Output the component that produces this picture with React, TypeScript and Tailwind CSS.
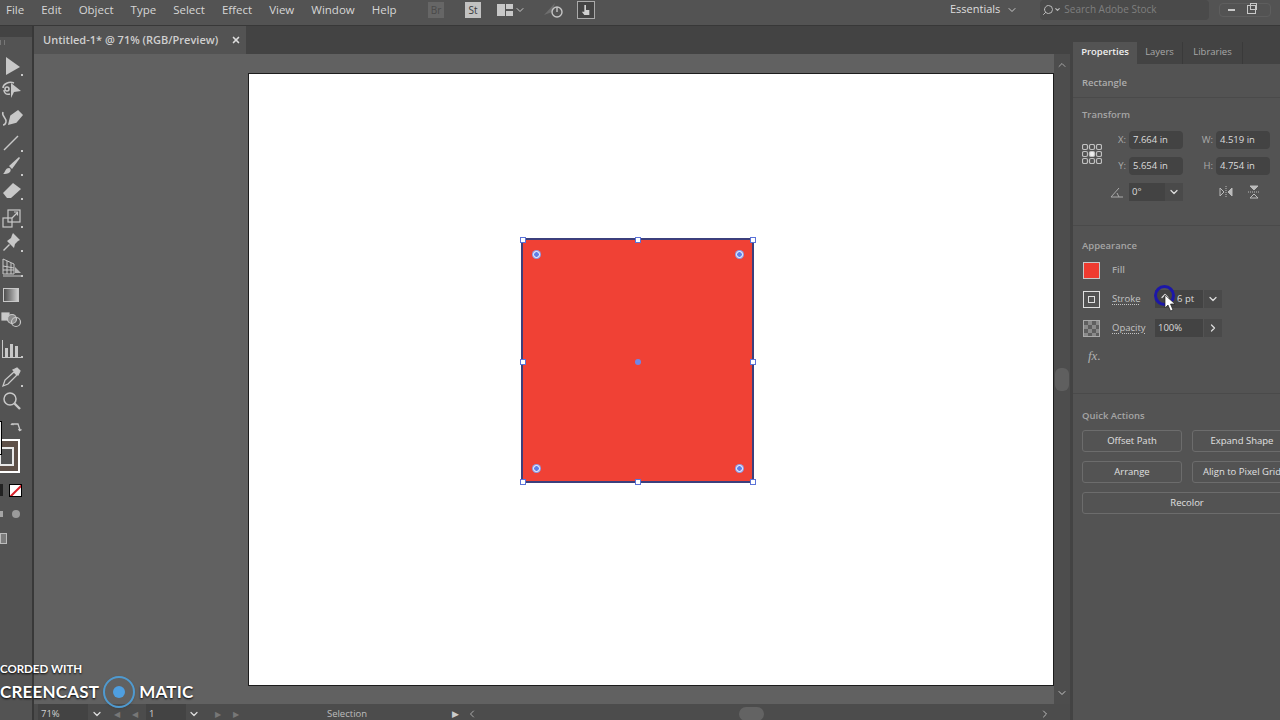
import { ChevronDown, ChevronRight, ChevronLeft, ChevronUp, Search, X } from "lucide-react"

const menus = ["File", "Edit", "Object", "Type", "Select", "Effect", "View", "Window", "Help"]

const tools: { key: string; cls: string; icon: React.ReactNode }[] = [
  {
    key: "selection",
    cls: "h-6 mt-[9px]",
    icon: (
      <svg viewBox="0 0 24 24" className="w-6 h-6" fill="#c8c8c8">
        <path d="M6 3 L20 13 L6 21 Z" />
        <path d="M21 20h2v2h-2z" />
      </svg>
    ),
  },
  {
    key: "direct",
    cls: "h-6",
    icon: (
      <svg viewBox="0 0 24 24" className="w-6 h-6" fill="none" stroke="#c8c8c8" strokeWidth="1.5">
        <path d="M3 10c0-4 6-7 11-5M4 12c0 3 2 5 6 4" />
        <circle cx="7" cy="11" r="2" />
        <path d="M11 5 L21 13 L14 14 L11 20 Z" fill="#c8c8c8" stroke="none" />
      </svg>
    ),
  },
  {
    key: "pen",
    cls: "h-6 mt-1",
    icon: (
      <svg viewBox="0 0 24 24" className="w-6 h-6" fill="none" stroke="#c8c8c8" strokeWidth="1.5">
        <path d="M9 18 L11 10 L18 5 L22 9 L16 16 Z" fill="#c8c8c8" />
        <path d="M3 6c-2 4 4 6 3 10-.5 2-2 3-3 3" />
      </svg>
    ),
  },
  {
    key: "line",
    cls: "h-6",
    icon: (
      <svg viewBox="0 0 24 24" className="w-6 h-6" fill="none" stroke="#c8c8c8" strokeWidth="1.4">
        <path d="M4 20 L18 6" />
        <path d="M21 20h2v2h-2z" fill="#c8c8c8" stroke="none" />
      </svg>
    ),
  },
  {
    key: "brush",
    cls: "h-6",
    icon: (
      <svg viewBox="0 0 24 24" className="w-6 h-6" fill="#c8c8c8">
        <path d="M9 12 L19 3 L20 4 L12 15 Z" />
        <path d="M3 20c2-1 2-6 6-6 2 0 2 3 1 4-2 2-5 2-7 2Z" />
        <path d="M21 20h2v2h-2z" />
      </svg>
    ),
  },
  {
    key: "eraser",
    cls: "h-6",
    icon: (
      <svg viewBox="0 0 24 24" className="w-6 h-6" fill="#c8c8c8">
        <path d="M3 15 L13 5 L21 11 L11 20 H7 Z" />
        <path d="M21 20h2v2h-2z" />
      </svg>
    ),
  },
  {
    key: "scale",
    cls: "h-6 mt-1",
    icon: (
      <svg viewBox="0 0 24 24" className="w-6 h-6" fill="none" stroke="#c8c8c8" strokeWidth="1.2">
        <rect x="3" y="12" width="9" height="9" />
        <rect x="8" y="4" width="12" height="12" />
        <path d="M12 12l5-5M14 6h3.500v3.500" />
        <path d="M21 20h2v2h-2z" fill="#c8c8c8" stroke="none" />
      </svg>
    ),
  },
  {
    key: "pin",
    cls: "h-6",
    icon: (
      <svg viewBox="0 0 24 24" className="w-6 h-6" fill="#c8c8c8">
        <path d="M13 3 L20 10 L18 11 L15 14 L14 18 L7 11 L11 8 L12 5 Z" />
        <path d="M3 20 L9 14 L10 15 L4 21 Z" />
        <path d="M21 20h2v2h-2z" />
      </svg>
    ),
  },
  {
    key: "mesh",
    cls: "h-6 mt-px",
    icon: (
      <svg viewBox="0 0 24 24" className="w-6 h-6" fill="none" stroke="#c8c8c8" strokeWidth="1">
        <path d="M3 4 L14 9 V19 H3 Z M3 11 L14 13 M3 15 H14 M7 6 V19 M11 8 V19" />
        <path d="M15 12 L21 18 H15 Z" fill="#b5b5b5" stroke="none" />
        <path d="M3 21h18" />
        <path d="M21 20h2v2h-2z" fill="#c8c8c8" stroke="none" />
      </svg>
    ),
  },
  {
    key: "gradient",
    cls: "h-6 mt-1",
    icon: <div className="w-4 h-[14px] ml-[3px] mt-[5px] border border-[#c8c8c8] bg-gradient-to-r from-[#4f4f4f] to-[#cfcfcf]" />,
  },
  {
    key: "blend",
    cls: "h-6",
    icon: (
      <svg viewBox="0 0 24 24" className="w-6 h-6" fill="none" stroke="#c8c8c8" strokeWidth="1.2">
        <rect x="2" y="6" width="7" height="7" fill="#c8c8c8" />
        <circle cx="12" cy="12" r="4.500" fill="#8a8a8a" />
        <circle cx="16" cy="15" r="4.500" />
      </svg>
    ),
  },
  {
    key: "chart",
    cls: "h-6 mt-[5px]",
    icon: (
      <svg viewBox="0 0 24 24" className="w-6 h-6" fill="#c8c8c8">
        <path d="M2 4h1v17h18v1H2z" />
        <path d="M5 12h3v9H5zM10 8h3v13h-3zM15 10h3v11h-3z" />
        <path d="M21 20h2v2h-2z" />
      </svg>
    ),
  },
  {
    key: "eyedropper",
    cls: "h-6 mt-[5px]",
    icon: (
      <svg viewBox="0 0 24 24" className="w-6 h-6" fill="none" stroke="#c8c8c8" strokeWidth="1.3">
        <path d="M3 21 L5 15 L14 7 L17 10 L8 19 Z" />
        <path d="M13 5 L17 3 L20 6 L18 10 Z" fill="#c8c8c8" />
        <path d="M21 20h2v2h-2z" fill="#c8c8c8" stroke="none" />
      </svg>
    ),
  },
  {
    key: "zoom",
    cls: "h-6",
    icon: (
      <svg viewBox="0 0 24 24" className="w-6 h-6" fill="none" stroke="#c8c8c8" strokeWidth="1.5">
        <circle cx="10" cy="10" r="6" />
        <path d="M14.500 14.500 L20 20" strokeWidth="2.400" />
      </svg>
    ),
  },
]

function Toolbar() {
  return (
    <div className="w-[32px] shrink-0 bg-[#535353] flex flex-col overflow-hidden">
      <div className="h-[11px] shrink-0 bg-[#434343]" />
      <div className="h-[5px] mt-[3px] shrink-0 w-[5px] border-x border-[#777]" />
      {tools.map((t) => (
        <div key={t.key} className={t.cls}>
          {t.icon}
        </div>
      ))}
      <div className="relative h-[58px] mt-[6px] shrink-0">
        <svg viewBox="0 0 12 12" className="absolute left-[10px] top-[2px] w-[12px] h-[12px]" fill="none" stroke="#c8c8c8" strokeWidth="1.3">
          <path d="M2 3h6l2 6M1 4l1-1.500M2 3l1.500 1M10 10L8.500 8M10 9.500l1.500-1" />
        </svg>
        <div className="absolute -left-[8px] top-[20px] w-[28px] h-[34px] border-2 border-white bg-[#5e5048] flex items-center justify-center">
          <div className="w-[15px] h-[19px] border-2 border-[#e8e8e8] bg-[#535353]" />
        </div>
        <div className="absolute -left-[6px] top-[2px] w-[8px] h-[34px] bg-[#f0f0f0] border border-black" />
      </div>
      <div className="h-[24px] mt-px flex items-center">
        <div className="w-[3px] h-[12px] bg-[#222]" />
        <div className="ml-[6px] w-[13px] h-[13px] border border-black bg-white overflow-hidden relative">
          <div className="absolute left-[-3px] top-[5px] w-[18px] h-[2px] bg-[#d8202a] -rotate-45" />
        </div>
      </div>
      <div className="h-[24px] flex items-center">
        <div className="w-[3px] h-[6px] bg-[#a5a5a5]" />
        <div className="ml-[9px] w-[8px] h-[8px] rounded-full bg-[#9a9a9a]" />
      </div>
      <div className="mt-[7px] w-[7px] h-[11px] border border-[#bbb] bg-[#7c7c7c]" />
    </div>
  )
}

function Field({ label, value }: { label: string; value: string }) {
  return (
    <div className="flex items-center h-[18px] w-[71px] shrink-0">
      <span className="w-[17px] shrink-0 text-[9.500px] text-[#aaa] text-right pr-[3px]">{label}</span>
      <span className="w-[54px] h-[18px] bg-[#434343] rounded-sm text-[9.500px] text-[#dcdcdc] pl-1 leading-[18px]">{value}</span>
    </div>
  )
}

function QuickBtn({ label, cls }: { label: string; cls: string }) {
  return (
    <div className={`${cls} shrink-0 h-[22px] border border-[#6c6c6c] rounded-[3px] text-[9.500px] font-medium leading-[20px] text-center text-[#e0e0e0] whitespace-nowrap`}>{label}</div>
  )
}

function RightPanel() {
  return (
    <div className="w-[207px] shrink-0 bg-[#535353] overflow-hidden flex flex-col">
      <div className="h-[16px] bg-[#434343] shrink-0" />
      <div className="h-[22px] bg-[#434343] shrink-0 flex text-[9.500px] leading-[20px]">
        <div className="w-[64px] bg-[#535353] text-[#f0f0f0] font-semibold text-center">Properties</div>
        <div className="w-[46px] text-[#a8a8a8] text-center border-r border-[#3a3a3a]">Layers</div>
        <div className="w-[60px] text-[#a8a8a8] text-center border-r border-[#3a3a3a]">Libraries</div>
      </div>
      <div className="px-[9px] pt-[12px] h-[34px] border-b border-[#4a4a4a] text-[9.500px] font-semibold text-[#adadad] shrink-0">Rectangle</div>
      <div className="pl-[9px] pt-[10px] h-[128px] border-b border-[#4a4a4a] shrink-0">
        <div className="text-[9.500px] font-semibold text-[#a5a5a5] leading-[14px]">Transform</div>
        <div className="flex mt-[9px]">
          <svg viewBox="0 0 20 20" className="w-[20px] h-[20px] mt-[13px] shrink-0" fill="none" stroke="#c0c0c0" strokeWidth="1.200">
            {[2, 9, 16].map((x) => [2, 9, 16].map((y) => (
              <rect key={`${x}-${y}`} x={x - 1.5} y={y - 1.5} width="5" height="5" rx="1.500" fill={x === 9 && y === 9 ? "#eee" : "none"} />
            )))}
          </svg>
          <div className="ml-[10px] flex flex-col gap-2 -mr-[100px]">
            <div className="flex gap-[16px]">
              <Field label="X:" value="7.664 in" />
              <Field label="W:" value="4.519 in" />
            </div>
            <div className="flex gap-[16px]">
              <Field label="Y:" value="5.654 in" />
              <Field label="H:" value="4.754 in" />
            </div>
            <div className="flex items-center h-[18px]">
              <svg viewBox="0 0 14 12" className="w-[14px] h-[12px] -ml-[2px] mr-[5px] shrink-0" fill="none" stroke="#aaa" strokeWidth="1">
                <path d="M1 11h12M1 11L9 2M7 7l2 4" />
              </svg>
              <div className="w-[36px] h-[18px] bg-[#434343] text-[9.500px] text-[#dcdcdc] pl-[3px] leading-[18px]">0°</div>
              <div className="w-[18px] h-[18px] bg-[#4a4a4a] flex items-center justify-center">
                <ChevronDown className="w-3 h-3 text-[#ddd]" strokeWidth={2.5} />
              </div>
              <svg viewBox="0 0 14 12" className="ml-[36px] w-[14px] h-[12px]" fill="#bbb" stroke="#bbb">
                <path d="M7 0v12" strokeDasharray="1 1" />
                <path d="M1 2 L5 6 L1 10 Z" fill="none" />
                <path d="M13 2 L9 6 L13 10 Z" />
              </svg>
              <svg viewBox="0 0 12 14" className="ml-[15px] w-[12px] h-[14px]" fill="#bbb" stroke="#bbb">
                <path d="M0 7h12" strokeDasharray="1 1" />
                <path d="M2 1 L10 1 L6 5 Z" />
                <path d="M2 13 L10 13 L6 9 Z" fill="none" />
              </svg>
            </div>
          </div>
        </div>
      </div>
      <div className="pl-[9px] pt-[13px] h-[168px] border-b border-[#4a4a4a] shrink-0">
        <div className="text-[9.500px] font-semibold text-[#a5a5a5] leading-[14px]">Appearance</div>
        <div className="flex items-center h-[18px] mt-[8px]">
          <div className="ml-px w-[17px] h-[17px] bg-[#ef3b30] border border-[#c8c8c8] shrink-0" />
          <span className="ml-[12px] mt-px text-[9.500px] font-semibold text-[#a8a8a8]">Fill</span>
        </div>
        <div className="flex items-center h-[18px] mt-[11px]">
          <div className="ml-px w-[17px] h-[17px] border border-[#e0e0e0] flex items-center justify-center shrink-0">
            <div className="w-[7px] h-[7px] border border-[#e0e0e0]" />
          </div>
          <span className="ml-[12px] mt-px w-[39px] text-[9.500px] text-[#c4c4c4] underline decoration-dotted underline-offset-2">Stroke</span>
          <div className="ml-[4px] w-[48px] h-[18px] bg-[#434343] text-[9.500px] text-[#dcdcdc] pl-[22px] leading-[18px]">6 pt</div>
          <div className="w-[18px] h-[18px] bg-[#4a4a4a] flex items-center justify-center ml-px">
            <ChevronDown className="w-3 h-3 text-[#ddd]" strokeWidth={2.5} />
          </div>
        </div>
        <div className="flex items-center h-[18px] mt-[11px]">
          <div className="ml-px w-[17px] h-[17px] border border-[#aaa] bg-[repeating-conic-gradient(#8a8a8a_0_25%,#5f5f5f_0_50%)] bg-[length:8px_8px] shrink-0" />
          <span className="ml-[12px] mt-px w-[39px] text-[9.500px] text-[#c4c4c4] underline decoration-dotted underline-offset-2">Opacity</span>
          <div className="ml-[4px] w-[48px] h-[18px] bg-[#434343] text-[9.500px] text-[#dcdcdc] pl-[3px] leading-[18px]">100%</div>
          <div className="w-[18px] h-[18px] bg-[#4a4a4a] flex items-center justify-center ml-px">
            <ChevronRight className="w-3 h-3 text-[#ddd]" strokeWidth={2.5} />
          </div>
        </div>
        <div className="ml-[6px] mt-[11px] font-['Liberation_Serif',serif] italic text-[13px] text-[#b0b0b0] leading-4">fx.</div>
      </div>
      <div className="pl-[9px] pt-[15px]">
        <div className="text-[9.500px] font-semibold text-[#a5a5a5] leading-[14px]">Quick Actions</div>
        <div className="flex gap-[10px] mt-[7px]">
          <QuickBtn label="Offset Path" cls="w-[100px]" />
          <QuickBtn label="Expand Shape" cls="w-[100px]" />
        </div>
        <div className="flex gap-[10px] mt-[9px]">
          <QuickBtn label="Arrange" cls="w-[100px]" />
          <QuickBtn label="Align to Pixel Grid" cls="w-[100px]" />
        </div>
        <div className="flex mt-[9px] w-[210px]">
          <QuickBtn label="Recolor" cls="w-[210px]" />
        </div>
      </div>
    </div>
  )
}

function Handle({ cls }: { cls: string }) {
  return <div className={`absolute w-[6px] h-[6px] bg-white border border-[#5b73d8] ${cls}`} />
}

function Corner({ cls }: { cls: string }) {
  return <div className={`absolute w-[7px] h-[7px] rounded-full bg-[#5f7fe8] border-[1.500px] border-white ring-1 ring-[#8f9fe8] ${cls}`} />
}

function Canvas() {
  return (
    <div className="flex-1 flex min-h-0">
      <div className="flex-1 bg-[#616161] pl-[214px] pt-[19px] overflow-hidden">
        <div className="relative w-[806px] h-[613px] bg-white border border-[#1c1c1c]">
          <div className="absolute left-[272px] top-[164px] w-[233px] h-[245px] bg-[#f04135] border-2 border-[#3c3f7c] rounded-[4px]" />
          <Handle cls="left-[271px] top-[163px]" />
          <Handle cls="left-[386px] top-[163px]" />
          <Handle cls="left-[501px] top-[163px]" />
          <Handle cls="left-[271px] top-[285px]" />
          <Handle cls="left-[501px] top-[285px]" />
          <Handle cls="left-[271px] top-[405px]" />
          <Handle cls="left-[386px] top-[405px]" />
          <Handle cls="left-[501px] top-[405px]" />
          <Corner cls="left-[284px] top-[177px]" />
          <Corner cls="left-[487px] top-[177px]" />
          <Corner cls="left-[284px] top-[391px]" />
          <Corner cls="left-[487px] top-[391px]" />
          <div className="absolute left-[386px] top-[285px] w-[6px] h-[6px] rounded-full bg-[#6f86e8]" />
        </div>
      </div>
      <div className="w-[16px] bg-[#4d4d4d] shrink-0 flex flex-col items-center justify-between py-[5px]">
        <ChevronUp className="w-3 h-3 text-[#a5a5a5]" />
        <div className="w-[14px] h-[23px] rounded-md bg-[#5f5f5f]" />
        <ChevronDown className="w-3 h-3 text-[#c5c5c5]" />
      </div>
    </div>
  )
}

function StatusBar() {
  return (
    <div className="h-[16px] shrink-0 bg-[#4c4c4c] overflow-hidden text-[9.500px] text-[#d0d0d0]">
      <div className="h-[20px] flex items-center">
        <div className="ml-[4px] w-[50px] h-[20px] bg-[#434343] pl-[3px] leading-[20px]">71%</div>
        <ChevronDown className="ml-[3px] w-3 h-3 text-[#ddd]" strokeWidth={2.5} />
        <div className="ml-[11px] w-[32px] flex gap-[12px] text-[8px] text-[#777]">
          <span>◀</span>
          <span>◀</span>
        </div>
        <div className="w-[40px] h-[20px] bg-[#434343] pl-[3px] leading-[20px]">1</div>
        <ChevronDown className="ml-[2px] w-3 h-3 text-[#ddd]" strokeWidth={2.5} />
        <div className="ml-[15px] w-[30px] flex gap-[12px] text-[8px] text-[#777]">
          <span>▶</span>
          <span>▶</span>
        </div>
        <div className="w-[204px] text-center text-[#bdbdbd]">Selection</div>
        <span className="ml-[3px] text-[9px] text-[#ccc]">▶</span>
        <ChevronLeft className="ml-[7px] w-3 h-3 text-[#aaa]" />
        <div className="ml-[261px] w-[25px] h-[14px] rounded-full bg-[#636363]" />
        <div className="flex-1" />
        <ChevronRight className="mr-[19px] w-3 h-3 text-[#bbb]" />
      </div>
    </div>
  )
}

export default function App() {
  return (
    <div className="relative w-[1280px] h-[720px] overflow-hidden bg-[#535353] flex flex-col font-['Open_Sans',sans-serif]">
      {/* Menu bar */}
      <div className="h-[26px] shrink-0 bg-[#535353] border-b border-[#383838] flex items-center text-[11.500px] text-[#d6d6d6] pb-[6px]">
        <div className="flex gap-[17px] pl-[6px] w-[428px] shrink-0 whitespace-nowrap">
          {menus.map((m) => (
            <span key={m}>{m}</span>
          ))}
        </div>
        <div className="w-[16px] h-[16px] bg-[#666] text-[10px] text-[#4a4a4a] text-center leading-4">Br</div>
        <div className="ml-[21px] w-[16px] h-[16px] bg-[#c2c2c2] text-[10px] text-[#3a3a3a] text-center leading-4">St</div>
        <svg viewBox="0 0 16 12" className="ml-[16px] w-[16px] h-[12px]" fill="#c8c8c8">
          <path d="M0 0h8v12H0zM9 0h7v5H9zM9 7h7v5H9z" />
        </svg>
        <ChevronDown className="ml-[1px] w-3 h-3 text-[#c8c8c8]" />
        <svg viewBox="0 0 24 18" className="ml-[16px] w-[24px] h-[18px]" fill="none" stroke="#9a9a9a" strokeWidth="1.4">
          <path d="M2 14 L13 2 L10 11 Z" fill="#6e6e6e" stroke="none" />
          <circle cx="15" cy="11" r="5" stroke="#c5c5c5" />
          <path d="M15 6v5" stroke="#c5c5c5" />
        </svg>
        <div className="ml-[11px] w-[18px] h-[18px] border border-[#aaa] bg-[#444] flex items-center justify-center">
          <svg viewBox="0 0 12 14" className="w-[10px] h-[12px]" fill="#d0d0d0">
            <path d="M4 1h2v6h4v6H4L1 9h3z" />
          </svg>
        </div>
        <span className="ml-[355px] text-[11px] text-[#dedede]">Essentials</span>
        <ChevronDown className="ml-[6px] w-3 h-3 text-[#c8c8c8]" />
        <div className="ml-[22px] w-[169px] h-[20px] bg-[#4a4a4a] rounded-sm flex items-center pl-[2px] text-[10px] text-[#7f7f7f] shrink-0">
          <Search className="w-[12px] h-[12px] text-[#bbb] -scale-x-100" />
          <ChevronDown className="w-[7px] h-[7px] text-[#bbb] mr-[3px]" strokeWidth={4} />
          Search Adobe Stock
        </div>
        <div className="ml-[10px] h-[14px] w-[52px] shrink-0 rounded-sm border border-[#5e5e5e] flex items-center">
          <div className="ml-[8px] w-[7px] h-[2px] bg-[#c8c8c8]" />
          <div className="relative ml-[12px] w-[9px] h-[9px] border border-[#c8c8c8]">
            <div className="absolute -top-[3px] left-[2px] w-[7px] h-[7px] border border-[#c8c8c8]" />
          </div>
        </div>
      </div>
      {/* Workspace */}
      <div className="flex-1 flex min-h-0">
        <Toolbar />
        <div className="w-[2px] bg-[#383838] shrink-0" />
        <div className="w-[1036px] shrink-0 flex flex-col">
          <div className="h-[28px] shrink-0 bg-[#434343] flex">
            <div className="w-[212px] bg-[#535353] flex items-center justify-between pl-[9px] pr-[5px] text-[11px] font-semibold text-[#cfcfcf]">
              <span>Untitled-1* @ 71% (RGB/Preview)</span>
              <X className="w-[10px] h-[10px] text-[#ddd]" strokeWidth={4} />
            </div>
          </div>
          <Canvas />
          <StatusBar />
        </div>
        <div className="w-[3px] bg-[#434343] shrink-0" />
        <RightPanel />
      </div>
      {/* Recorder watermark */}
      <div className="absolute left-0 top-[661px] font-['Lato',sans-serif] font-bold text-white [text-shadow:0_1px_2px_#000] pointer-events-none">
        <div className="text-[11.500px] leading-4">CORDED WITH</div>
        <div className="flex items-center -mt-px text-[17px] tracking-[0.2px]">
          <span>CREENCAST</span>
          <div className="mx-[4px] w-[32px] h-[32px] rounded-full border-2 border-[#4f9ad0] flex items-center justify-center shadow">
            <div className="w-[12px] h-[12px] rounded-full bg-[#4f9fe0]" />
          </div>
          <span>MATIC</span>
        </div>
      </div>
      {/* Pointer over the stroke field */}
      <div className="absolute left-[1154px] top-[285px] pointer-events-none">
        <div className="w-[21px] h-[21px] rounded-full border-[3px] border-[#1c17a8] flex items-center justify-center">
          <ChevronUp className="w-3 h-3 text-[#ddd]" strokeWidth={2.5} />
        </div>
        <svg viewBox="0 0 12 18" className="absolute left-[10px] top-[9px] w-[12px] h-[18px]">
          <path d="M1 1 L1 14 L4 11 L6.500 17 L9 16 L6.500 10 L11 10 Z" fill="#fff" stroke="#222" strokeWidth="0.7" />
        </svg>
      </div>
    </div>
  )
}
